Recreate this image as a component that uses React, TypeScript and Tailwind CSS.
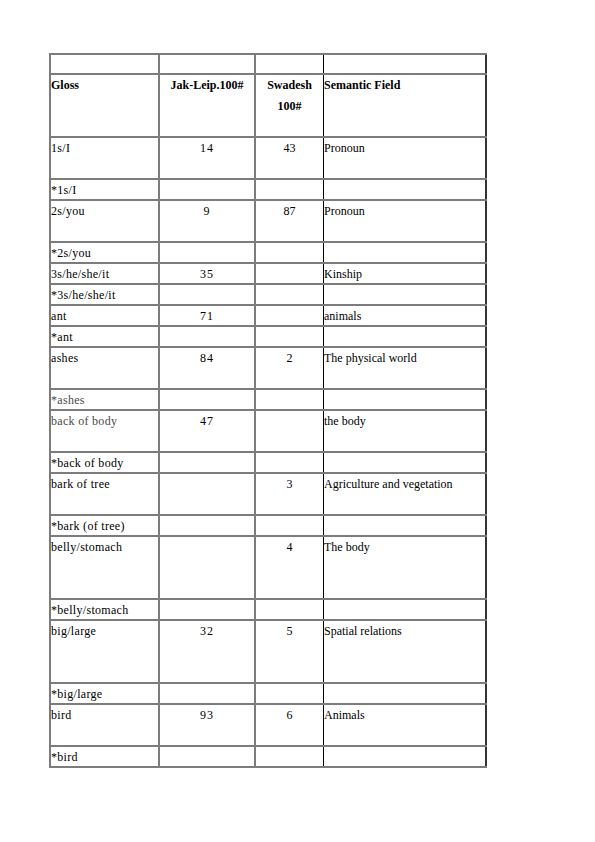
import React from "react";

type Row = {
  g?: string;
  j?: string;
  s?: string;
  f?: string;
  h: 1 | 2 | 3;
  gray?: boolean;
};

const rows: Row[] = [
  { g: "1s/I", j: "14", s: "43", f: "Pronoun", h: 2 },
  { g: "*1s/I", h: 1 },
  { g: "2s/you", j: "9", s: "87", f: "Pronoun", h: 2 },
  { g: "*2s/you", h: 1 },
  { g: "3s/he/she/it", j: "35", f: "Kinship", h: 1 },
  { g: "*3s/he/she/it", h: 1 },
  { g: "ant", j: "71", f: "animals", h: 1 },
  { g: "*ant", h: 1 },
  { g: "ashes", j: "84", s: "2", f: "The physical world", h: 2 },
  { g: "*ashes", h: 1, gray: true },
  { g: "back of body", j: "47", f: "the body", h: 2, gray: true },
  { g: "*back of body", h: 1 },
  { g: "bark of tree", s: "3", f: "Agriculture and vegetation", h: 2 },
  { g: "*bark (of tree)", h: 1 },
  { g: "belly/stomach", s: "4", f: "The body", h: 3 },
  { g: "*belly/stomach", h: 1 },
  { g: "big/large", j: "32", s: "5", f: "Spatial relations", h: 3 },
  { g: "*big/large", h: 1 },
  { g: "bird", j: "93", s: "6", f: "Animals", h: 2 },
  { g: "*bird", h: 1 },
];

const heightClass = (h: 1 | 2 | 3) =>
  h === 1 ? "h-[21px]" : h === 2 ? "h-[42px]" : "h-[63px]";

function TableRow({ r }: { r: Row }) {
  return (
    <div className={`flex ${heightClass(r.h)} border-b-2 border-[#7c7c7c]`}>
      <div
        className={`w-[109px] shrink-0 border-r-2 border-[#7c7c7c] tracking-[0.3px] ${
          r.gray ? "text-[#4a4a4a]" : "text-black"
        }`}
      >
        {r.g}
      </div>
      <div className="w-[96px] shrink-0 border-r-2 border-[#7c7c7c] text-center tracking-[1px]">
        {r.j}
      </div>
      <div className="w-[68px] shrink-0 border-r border-black text-center">
        {r.s}
      </div>
      <div className="w-[163px] shrink-0 border-r-2 border-[#333333]">
        {r.f}
      </div>
    </div>
  );
}

export default function App() {
  return (
    <div className="w-[595px] h-[842px] bg-white pt-[53px] pl-[49px]">
      <div
        className="w-[438px] border-t-2 border-l-2 border-[#7c7c7c] text-[12px] leading-[21px] text-black"
        style={{ fontFamily: '"Liberation Serif", "Times New Roman", serif' }}
      >
        <div className="flex h-[20px] border-b-2 border-[#7c7c7c]">
          <div className="w-[109px] shrink-0 border-r-2 border-[#7c7c7c]" />
          <div className="w-[96px] shrink-0 border-r-2 border-[#7c7c7c]" />
          <div className="w-[68px] shrink-0 border-r border-black" />
          <div className="w-[163px] shrink-0 border-r-2 border-[#333333]" />
        </div>
        <div className="flex h-[63px] border-b-2 border-[#7c7c7c] font-bold">
          <div className="w-[109px] shrink-0 border-r-2 border-[#7c7c7c]">
            Gloss
          </div>
          <div className="w-[96px] shrink-0 border-r-2 border-[#7c7c7c] text-center">
            Jak-Leip.100#
          </div>
          <div className="w-[68px] shrink-0 border-r border-black text-center">
            Swadesh
            <br />
            100#
          </div>
          <div className="w-[163px] shrink-0 border-r-2 border-[#333333]">
            Semantic Field
          </div>
        </div>
        {rows.map((r, i) => (
          <TableRow key={i} r={r} />
        ))}
      </div>
    </div>
  );
}
